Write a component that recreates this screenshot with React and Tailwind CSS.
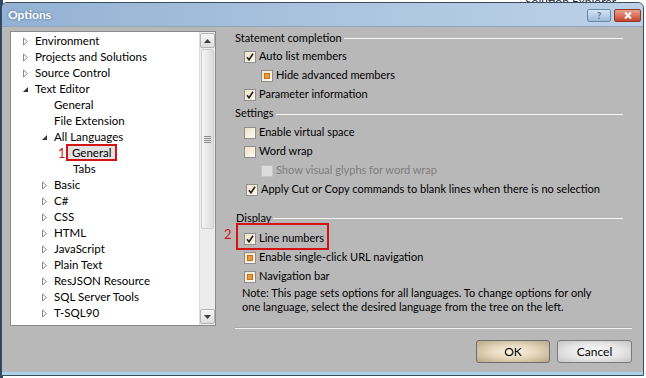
import React from "react";

const FONT = { fontFamily: 'Lato, "Noto Sans", sans-serif' };

function Tri({ open }) {
  if (open) {
    return (
      <svg width="7" height="7" viewBox="0 0 7 7" className="shrink-0">
        <path d="M6 1 L6 6 L1 6 Z" fill="#333" />
      </svg>
    );
  }
  return (
    <svg width="7" height="9" viewBox="0 0 7 9" className="shrink-0">
      <path d="M1.5 1 L5.5 4.5 L1.5 8 Z" fill="none" stroke="#8a8a8a" strokeWidth="1" />
    </svg>
  );
}

function TreeRow({ level, label, tri, open, children }) {
  const pads = ["pl-[11px]", "pl-[30px]", "pl-[49px]"];
  return (
    <div className={`h-[16px] flex items-center ${pads[level]}`}>
      <div className="w-[13px] flex items-center">{tri ? <Tri open={open} /> : null}</div>
      {children ? children : <span>{label}</span>}
    </div>
  );
}

function Check({ state = "empty", className = "" }) {
  if (state === "disabled") {
    return <div className={`w-[12px] h-[12px] border border-[#c4c4c4] bg-[#dcdcdc] shrink-0 ${className}`} />;
  }
  return (
    <div
      className={`w-[12px] h-[12px] border border-[#8e8e8e] bg-gradient-to-br from-[#efe3c8] to-[#fdf9f0] shrink-0 flex items-center justify-center ${className}`}
    >
      {state === "checked" && (
        <svg width="10" height="10" viewBox="0 0 10 10">
          <path d="M2 5.2 L4 7.8 L8 1.8" fill="none" stroke="#222" strokeWidth="1.6" />
        </svg>
      )}
      {state === "mixed" && <div className="w-[6px] h-[6px] bg-[#ec9a3a] border border-[#c8701c]" />}
    </div>
  );
}

function OptRow({ state, label, indent = "pl-[25px]", gap = "gap-[3px]", disabled }) {
  return (
    <div className={`h-[19px] flex items-center ${indent} ${gap}`}>
      <Check state={state} />
      <span className={disabled ? "text-[#7d7d7d]" : ""}>{label}</span>
    </div>
  );
}

function GroupLabel({ label, className = "" }) {
  return (
    <div className={`h-[18px] flex items-center gap-[2px] pr-[8px] ${className}`}>
      <span>{label}</span>
      <div className="flex-1 h-[1px] bg-[#f4f4f4] mt-[1px]" />
    </div>
  );
}

export default function App() {
  return (
    <div className="w-[646px] h-[378px] bg-white relative overflow-hidden text-[11px] text-black" style={FONT}>
      <div className="absolute right-[30px] top-[-7px] text-[12px] text-[#1e2a3a]">Solution Explorer</div>
      <div className="absolute left-0 top-0 w-[3px] h-[378px] bg-[#2c4868]" />
      <div className="absolute left-[1px] top-[2px] w-[643px] h-[374px] rounded-t-[6px] border border-[#3b4a5c] bg-[#b8b8b8] flex flex-col overflow-hidden">
        {/* Title bar */}
        <div className="h-[24px] shrink-0 bg-gradient-to-r from-[#93b2d4] via-[#aac3de] to-[#bcd1e8] flex items-center justify-between pl-[6px] pr-[2px] border-b border-[#8ea6c0]">
          <span className="text-white font-bold text-[12px] [text-shadow:0_0_3px_#4f6f96]">Options</span>
          <div className="flex gap-[3px] items-center mt-[1px]">
            <div className="w-[24px] h-[13px] rounded-[2px] border border-[#6a88ab] bg-gradient-to-b from-[#d6e4f2] to-[#9fbad8] flex items-center justify-center text-[#56759c] text-[10px] leading-none font-bold">?</div>
            <div className="w-[27px] h-[13px] rounded-[2px] border border-[#8a3a2a] bg-gradient-to-b from-[#e8a090] to-[#c8402a] flex items-center justify-center">
              <svg width="10" height="9" viewBox="0 0 10 9">
                <path d="M2 1.5 L8 7.5 M8 1.5 L2 7.5" stroke="white" strokeWidth="2" />
              </svg>
            </div>
          </div>
        </div>
        {/* Client */}
        <div className="flex-1 flex relative border-b-[3px] border-[#a9d3ea]">
          {/* Tree */}
          <div className="ml-[8px] mt-[4px] w-[206px] h-[295px] border border-[#8b8b8b] bg-white flex relative text-[11.5px]">
            <div className="flex-1 pt-[1px]">
              <TreeRow level={0} tri label="Environment" />
              <TreeRow level={0} tri label="Projects and Solutions" />
              <TreeRow level={0} tri label="Source Control" />
              <TreeRow level={0} tri open label="Text Editor" />
              <TreeRow level={1} label="General" />
              <TreeRow level={1} label="File Extension" />
              <TreeRow level={1} tri open label="All Languages" />
              <TreeRow level={2}>
                <span className="relative">
                  <span className="absolute left-[-15px] top-[3px] text-[#d01818] text-[13px] leading-none">1</span>
                  <span className="relative px-[5px] ml-[-6px] bg-[#e2e2e2] outline-2 outline-[#d41414] -outline-offset-1 py-[1px]">General</span>
                </span>
              </TreeRow>
              <TreeRow level={2} label="Tabs" />
              <TreeRow level={1} tri label="Basic" />
              <TreeRow level={1} tri label="C#" />
              <TreeRow level={1} tri label="CSS" />
              <TreeRow level={1} tri label="HTML" />
              <TreeRow level={1} tri label="JavaScript" />
              <TreeRow level={1} tri label="Plain Text" />
              <TreeRow level={1} tri label="ResJSON Resource" />
              <TreeRow level={1} tri label="SQL Server Tools" />
              <TreeRow level={1} tri label="T-SQL90" />
            </div>
            {/* Scrollbar */}
            <div className="w-[16px] bg-[#ececec] border-l border-[#dedede] flex flex-col items-center py-[1px]">
              <div className="w-[15px] h-[15px] border border-[#b4b4b4] rounded-[2px] bg-gradient-to-b from-[#f6f6f6] to-[#dedede] flex items-center justify-center">
                <svg width="7" height="4" viewBox="0 0 7 4"><path d="M0 4 L3.5 0 L7 4 Z" fill="#3c3c3c" /></svg>
              </div>
              <div className="w-[13px] h-[180px] mt-[1px] border border-[#cfcfcf] rounded-[2px] bg-gradient-to-r from-[#f4f4f4] to-[#dcdcdc] flex items-center justify-center">
                <div className="flex flex-col gap-[1px]">
                  <div className="w-[7px] h-[1px] bg-[#8c8c8c]" />
                  <div className="w-[7px] h-[1px] bg-[#8c8c8c]" />
                  <div className="w-[7px] h-[1px] bg-[#8c8c8c]" />
                  <div className="w-[7px] h-[1px] bg-[#8c8c8c]" />
                </div>
              </div>
              <div className="flex-1" />
              <div className="w-[15px] h-[15px] border border-[#b4b4b4] rounded-[2px] bg-gradient-to-b from-[#f6f6f6] to-[#dedede] flex items-center justify-center">
                <svg width="7" height="4" viewBox="0 0 7 4"><path d="M0 0 L3.5 4 L7 0 Z" fill="#3c3c3c" /></svg>
              </div>
            </div>
          </div>
          {/* Right panel */}
          <div className="flex-1 flex flex-col pl-[19px]">
            <div className="h-[2px]" />
            <GroupLabel label="Statement completion" className="pr-[20px]" />
            <OptRow state="checked" label="Auto list members" indent="pl-[9px]" />
            <OptRow state="mixed" label="Hide advanced members" indent="pl-[26px]" />
            <OptRow state="checked" label="Parameter information" indent="pl-[9px]" />
            <GroupLabel label="Settings" className="h-[19px] pr-[20px]" />
            <OptRow state="empty" label="Enable virtual space" indent="pl-[9px]" />
            <OptRow state="empty" label="Word wrap" indent="pl-[9px]" />
            <OptRow state="disabled" label="Show visual glyphs for word wrap" indent="pl-[26px]" disabled />
            <OptRow state="checked" label="Apply Cut or Copy commands to blank lines when there is no selection" indent="pl-[11px]" />
            <GroupLabel label="Display" className="mt-[10px] pl-[1px] pr-[20px]" />
            <div className="relative mt-[2px]">
              <div className="absolute left-[1px] top-[-6px] w-[93px] h-[27px] border-2 border-[#d41414]" />
              <div className="absolute left-[-11px] top-[-4px] text-[#d01818] text-[13px]">2</div>
              <OptRow state="checked" label="Line numbers" indent="pl-[9px]" />
            </div>
            <OptRow state="mixed" label="Enable single-click URL navigation" indent="pl-[9px]" />
            <OptRow state="mixed" label="Navigation bar" indent="pl-[9px]" />
            <div className="pl-[7px] leading-[14px]">
              <div>Note: This page sets options for all languages. To change options for only</div>
              <div>one language, select the desired language from the tree on the left.</div>
            </div>
            <div className="h-[1px] bg-[#f0f0f0] mt-[13px] mr-[11px] border-t border-[#a8a8a8] box-content" />
            <div className="flex justify-end gap-[7px] mt-[11px] mr-[11px]">
              <button className="w-[74px] h-[23px] rounded-[3px] border border-[#6e6e6e] bg-[radial-gradient(ellipse_at_center,#fbf3e2_0%,#e6d8bc_45%,#b8a888_100%)] text-[12px]" style={FONT}>OK</button>
              <button className="w-[75px] h-[23px] rounded-[3px] border border-[#7a7a7a] bg-[radial-gradient(ellipse_at_center,#fafafa_0%,#e8e8e8_50%,#c4c4c4_100%)] text-[12px]" style={FONT}>Cancel</button>
            </div>
          </div>
        </div>
      </div>
    </div>
  );
}
